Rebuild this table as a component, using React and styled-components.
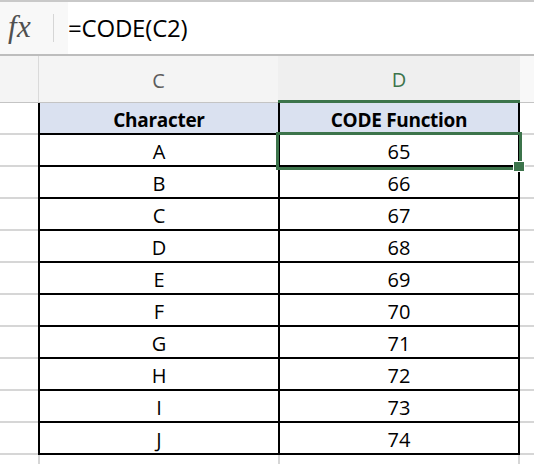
import React from 'react';
import styled, { createGlobalStyle } from 'styled-components';

const GREEN = '#3c744b';

const GlobalStyle = createGlobalStyle`
  html, body { margin: 0; padding: 0; background: #fff; }
  body {
    width: 534px;
    height: 464px;
    overflow: hidden;
    font-family: "Open Sans", "Liberation Sans", sans-serif;
    color: #000;
  }
  * { box-sizing: border-box; }
`;

const FormulaBar = styled.div`
  display: flex;
  align-items: center;
  height: 56px;
  border-top: 2px solid #c9c9c9;
  border-bottom: 2px solid #bdbdbd;
  background: #f8f8f8;
`;

const FxLabel = styled.div`
  width: 53px;
  padding-left: 8px;
  font-family: "Liberation Serif", "DejaVu Serif", serif;
  font-style: italic;
  font-size: 31px;
  letter-spacing: 0.5px;
  color: #505050;
  line-height: 1;
  margin-top: -4px;
`;

const Divider = styled.div`
  width: 1px;
  height: 28px;
  background: #d6d6d6;
`;

const FormulaInput = styled.div`
  flex: 1;
  align-self: stretch;
  display: flex;
  align-items: center;
  margin-left: 14px;
  background: #fff;
  font-size: 24px;
  letter-spacing: -0.2px;
  padding-bottom: 2px;
`;

const Grid = styled.div`
  display: grid;
  grid-template-columns: 38px 240px 242px 1fr;
`;

const ColHead = styled.div`
  height: 47px;
  display: flex;
  align-items: center;
  justify-content: center;
  font-size: 20px;
  background: ${p => (p.$active ? '#efefef' : p.$tail ? '#f8f8f8' : '#f4f4f4')};
  color: ${p => (p.$active ? GREEN : '#5c5c5c')};
  border-bottom: ${p => (p.$active ? `3px solid ${GREEN}` : '1px solid #c4c4c4')};
  border-left: ${p => (p.$divide ? '1px solid #dadada' : 'none')};
  padding-top: 2px;
`;

const RowHead = styled.div`
  height: 32px;
  border-bottom: 2px solid ${p => (p.$ghost ? 'transparent' : '#d6d6d6')};
  background: #fff;
`;

const Cell = styled.div`
  position: relative;
  height: 32px;
  display: flex;
  align-items: center;
  justify-content: center;
  font-weight: ${p => (p.$head ? 700 : 400)};
  font-size: ${p => (p.$head ? '19px' : '20px')};
  letter-spacing: ${p => (p.$head ? '-0.3px' : '0')};
  padding-top: 3px;
  background: ${p => (p.$head ? '#dae1f0' : '#fff')};
  border-left: 2px solid ${p => (p.$ghost ? '#d6d6d6' : '#000')};
  border-right: ${p => (p.$last ? `2px solid ${p.$ghost ? '#d6d6d6' : '#000'}` : 'none')};
  border-bottom: 2px solid ${p => (p.$ghost ? 'transparent' : '#000')};
`;

const Selection = styled.div`
  position: absolute;
  z-index: 2;
  left: -4px;
  top: -3px;
  width: 246px;
  height: 38px;
  border: 3px solid ${GREEN};
  pointer-events: none;
`;

const FillHandle = styled.div`
  position: absolute;
  left: 234px;
  top: 26px;
  width: 12px;
  height: 11px;
  background: ${GREEN};
  border: 1px solid #fff;
`;

const rows = [
  ['A', 65], ['B', 66], ['C', 67], ['D', 68], ['E', 69],
  ['F', 70], ['G', 71], ['H', 72], ['I', 73], ['J', 74],
];

export default function App() {
  return (
    <>
      <GlobalStyle />
      <FormulaBar>
        <FxLabel>fx</FxLabel>
        <Divider />
        <FormulaInput>=CODE(C2)</FormulaInput>
      </FormulaBar>
      <Grid>
        <ColHead />
        <ColHead $divide>C</ColHead>
        <ColHead $active>D</ColHead>
        <ColHead $tail />

        <RowHead />
        <Cell $head>Character</Cell>
        <Cell $head $last>CODE Function</Cell>
        <RowHead />

        {rows.map(([ch, code], i) => (
          <React.Fragment key={ch}>
            <RowHead />
            <Cell>{ch}</Cell>
            <Cell $last>
              {code}
              {i === 0 && (
                <Selection>
                  <FillHandle />
                </Selection>
              )}
            </Cell>
            <RowHead />
          </React.Fragment>
        ))}

        <RowHead $ghost />
        <Cell $ghost />
        <Cell $ghost $last />
        <RowHead $ghost />
      </Grid>
    </>
  );
}
